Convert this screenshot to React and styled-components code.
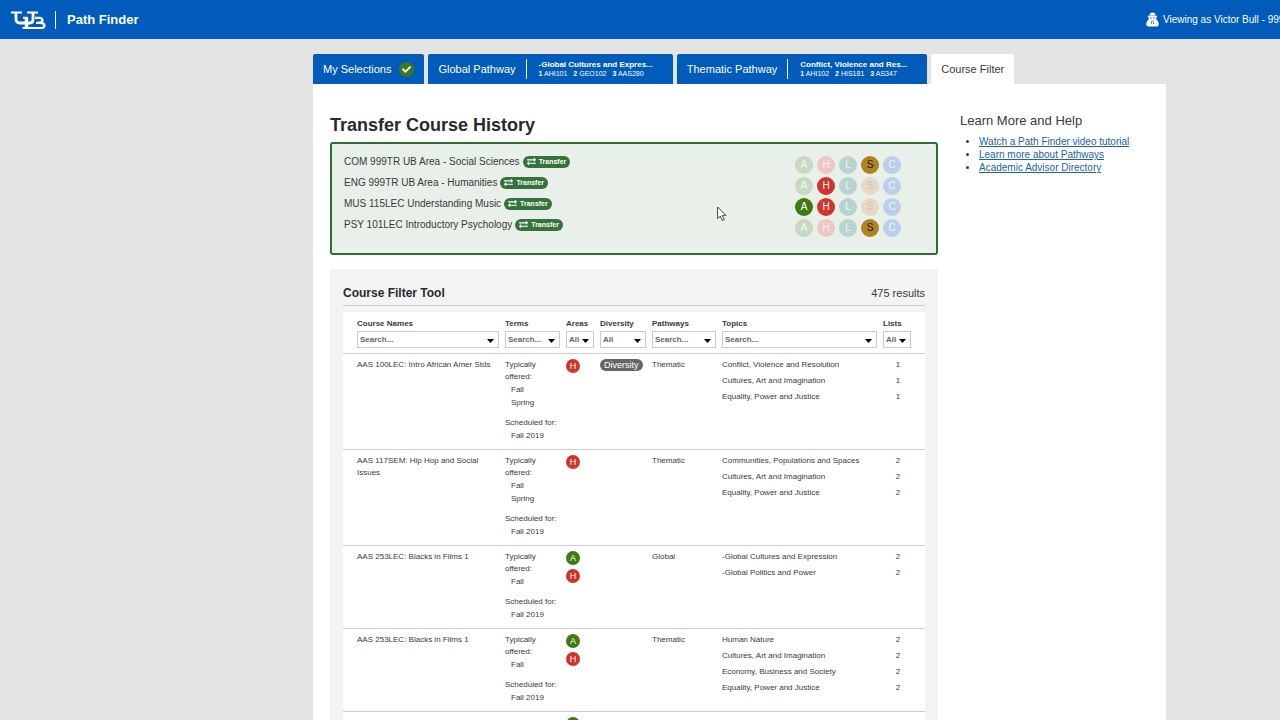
import React from 'react';
import styled, { createGlobalStyle, css } from 'styled-components';
import { FaCheck, FaExchangeAlt } from 'react-icons/fa';

const colors = {
  blue: '#005bbb',
  green: '#2d6e35',
  text: '#3a3a3a',
  line: '#ccc',
};

const areaColors = {
  A: { on: '#3f7a12', off: '#c9d8c0', text: '#fff', faded: '#f2f8ee' },
  H: { on: '#d2332a', off: '#ecc8c5', text: '#fff', faded: '#fbefed' },
  L: { on: '#00857c', off: '#b8d4d1', text: '#fff', faded: '#eef8f7' },
  S: { on: '#ad841f', off: '#e6dac6', text: '#1a1a1a', faded: '#dcc0b6' },
  C: { on: '#2f6fd0', off: '#bbcfe9', text: '#fff', faded: '#f0f6ff' },
};

const caretSVG =
  "<svg xmlns='http://www.w3.org/2000/svg' width='7' height='4'><path d='M0 0h7L3.5 4z' fill='black'/></svg>";

const GlobalStyle = createGlobalStyle`
  *, *::before, *::after {
    box-sizing: border-box;
  }

  body {
    margin: 0;
    background: #e4e4e4;
    color: ${colors.text};
    font-family: "Liberation Sans", Arial, sans-serif;
    font-size: 10px;
  }

  h1, h2, h3, p, ul {
    margin: 0;
    padding: 0;
  }
`;

const Header = styled.header`
  display: flex;
  align-items: center;
  height: 39px;
  padding-left: 11px;
  background: ${colors.blue};
  color: #fff;
`;

const Brand = styled.a`
  display: flex;
  align-items: center;
  color: inherit;
  font-size: 13px;
  font-weight: 700;
  text-decoration: none;
`;

const BrandName = styled.span`
  margin-left: 9px;
  padding-left: 11px;
  border-left: 1px solid #fff;
  line-height: 18px;
`;

const Viewer = styled.p`
  display: flex;
  align-items: center;
  gap: 4px;
  width: 134px;
  margin-left: auto;
  overflow: hidden;
  white-space: nowrap;

  svg {
    flex-shrink: 0;
  }
`;

const Page = styled.div`
  display: grid;
  grid-template-columns: minmax(0, 313fr) minmax(0, 853fr) minmax(0, 114fr);
  padding-top: 15px;
`;

const Content = styled.div`
  grid-column: 2;
`;

const Tabs = styled.nav`
  display: flex;
  gap: 4px;
`;

const Tab = styled.a`
  display: flex;
  align-items: center;
  height: 30px;
  padding: 0 10px;
  border-radius: 2px 2px 0 0;
  background: ${p => (p.$active ? '#fff' : colors.blue)};
  color: ${p => (p.$active ? colors.text : '#fff')};
  font-size: 11px;
  text-decoration: none;
  white-space: nowrap;
`;

const TabCheck = styled.span`
  display: grid;
  place-items: center;
  width: 15px;
  height: 15px;
  margin-left: 8px;
  border-radius: 50%;
  background: #3a7a1c;
`;

const TabDetail = styled.span`
  display: block;
  margin-left: 10px;
  padding: 1px 10px 1px 12px;
  border-left: 1px solid #fff;
  font-size: 8px;
  line-height: 9px;
`;

const TabCourses = styled.span`
  display: flex;
  gap: 6px;
  font-size: 7px;
`;

const Panel = styled.div`
  display: grid;
  grid-template-columns: minmax(0, 1fr) 206px;
  gap: 22px;
  padding: 29px 0 20px 17px;
  background: #fff;
`;

const PageTitle = styled.h1`
  margin-bottom: 5px;
  color: #2a2a2a;
  font-size: 18px;
  line-height: 24px;
`;

const History = styled.ul`
  position: relative;
  padding: 10px 35px 15px 12px;
  border: 2px solid ${colors.green};
  border-radius: 3px;
  background: #e9efe9;
  list-style: none;
`;

const HistoryItem = styled.li`
  display: flex;
  justify-content: space-between;
  height: 21px;
`;

const HistoryCourse = styled.p`
  display: flex;
  align-items: center;
  gap: 3px;
  height: 15px;
`;

const TransferBadge = styled.span`
  display: flex;
  align-items: center;
  gap: 3px;
  height: 12px;
  padding: 0 4px;
  border-radius: 6px;
  background: #34733a;
  color: #fff;
  font-size: 7px;
  font-weight: 700;
`;

const HistoryAreas = styled.div`
  display: flex;
  gap: 4px;
  padding-top: 2px;
`;

const AreaDot = styled.span`
  display: grid;
  place-items: center;
  width: ${p => (p.$small ? 14 : 18)}px;
  height: ${p => (p.$small ? 14 : 18)}px;
  border-radius: 50%;
  font-size: ${p => (p.$small ? 9 : 10)}px;
  line-height: 1;
  ${({ $area, $faded }) => css`
    background: ${areaColors[$area][$faded ? 'off' : 'on']};
    color: ${areaColors[$area][$faded ? 'faded' : 'text']};
  `}
`;

const Pointer = styled.svg`
  position: absolute;
  top: 62px;
  left: 385px;
`;

const FilterTool = styled.section`
  margin-top: 14px;
  padding: 14px 13px;
  background: #f3f3f3;
`;

const FilterHeader = styled.div`
  display: flex;
  justify-content: space-between;
  margin-bottom: 6px;
  padding-bottom: 2px;
  border-bottom: 1px solid ${colors.line};
  font-size: 11px;
  line-height: 20px;

  h2 {
    color: #2a2a2a;
    font-size: 12px;
  }
`;

const CourseTable = styled.table`
  width: 100%;
  table-layout: fixed;
  border-spacing: 0;
  background: #fff;
  font-size: 8px;
  line-height: 12px;
`;

const HeadCell = styled.th`
  width: ${p => p.$width};
  padding: 6px 6px 5px 0;
  border-bottom: 1px solid ${colors.line};
  text-align: left;
  vertical-align: top;

  &:first-child {
    padding-left: 14px;
  }

  &:last-child {
    padding-right: 14px;
  }

  label {
    display: block;
    margin-bottom: 1px;
  }
`;

const FilterSelect = styled.select`
  display: block;
  width: 100%;
  height: 17px;
  padding: 0 0 0 2px;
  border: 1px solid ${colors.line};
  border-radius: 0;
  appearance: none;
  background: #fff
    url("data:image/svg+xml;utf8,${encodeURIComponent(caretSVG)}") no-repeat
    right 4px top 7px;
  color: #666;
  font: 700 8px "Liberation Sans", Arial, sans-serif;
`;

const Cell = styled.td`
  padding: 5px 6px 7px 0;
  border-bottom: 1px solid ${colors.line};
  vertical-align: top;

  &:first-child {
    padding-left: 14px;
  }

  &:last-child {
    padding-right: 12px;
  }
`;

const TermList = styled.ul`
  padding-left: 6px;
  list-style: none;
  line-height: 13px;

  & + p {
    margin-top: 8px;
    white-space: nowrap;
  }
`;

const Stack = styled.ul`
  display: flex;
  flex-direction: column;
  gap: 4px;
  list-style: none;
  text-align: ${p => (p.$centered ? 'center' : 'left')};
`;

const DiversityBadge = styled.span`
  display: inline-block;
  padding: 0 4px;
  border-radius: 6px;
  background: #666;
  color: #fff;
  font-size: 9px;
`;

const Help = styled.aside`
  h3 {
    margin-bottom: 6px;
    font-size: 13px;
    font-weight: 400;
    line-height: 16px;
  }

  ul {
    padding-left: 19px;
    line-height: 13px;
  }

  a {
    color: #1a62ad;
  }
`;

const tabs = [
  { name: 'My Selections', done: true },
  {
    name: 'Global Pathway',
    topic: '-Global Cultures and Expres...',
    courses: ['AHI101', 'GEO102', 'AAS280'],
  },
  {
    name: 'Thematic Pathway',
    topic: 'Conflict, Violence and Res...',
    courses: ['AHI102', 'HIS181', 'AS347'],
  },
  { name: 'Course Filter', active: true },
];

const transfers = [
  { name: 'COM 999TR UB Area - Social Sciences', areas: 'S' },
  { name: 'ENG 999TR UB Area - Humanities', areas: 'H' },
  { name: 'MUS 115LEC Understanding Music', areas: 'AH' },
  { name: 'PSY 101LEC Introductory Psychology', areas: 'S' },
];

const filters = [
  { id: 'names', label: 'Course Names', value: 'Search...', width: '162px' },
  { id: 'terms', label: 'Terms', value: 'Search...', width: '61px' },
  { id: 'areas', label: 'Areas', value: 'All', width: '34px' },
  { id: 'diversity', label: 'Diversity', value: 'All', width: '52px' },
  { id: 'pathways', label: 'Pathways', value: 'Search...', width: '70px' },
  { id: 'topics', label: 'Topics', value: 'Search...' },
  { id: 'lists', label: 'Lists', value: 'All', width: '42px' },
];

const courses = [
  {
    name: 'AAS 100LEC: Intro African Amer Stds',
    terms: ['Fall', 'Spring'],
    areas: ['H'],
    diversity: true,
    pathway: 'Thematic',
    topics: [
      'Conflict, Violence and Resolution',
      'Cultures, Art and Imagination',
      'Equality, Power and Justice',
    ],
    lists: 1,
  },
  {
    name: 'AAS 117SEM: Hip Hop and Social Issues',
    terms: ['Fall', 'Spring'],
    areas: ['H'],
    pathway: 'Thematic',
    topics: [
      'Communities, Populations and Spaces',
      'Cultures, Art and Imagination',
      'Equality, Power and Justice',
    ],
    lists: 2,
  },
  {
    name: 'AAS 253LEC: Blacks in Films 1',
    terms: ['Fall'],
    areas: ['A', 'H'],
    pathway: 'Global',
    topics: ['-Global Cultures and Expression', '-Global Politics and Power'],
    lists: 2,
  },
  {
    name: 'AAS 253LEC: Blacks in Films 1',
    terms: ['Fall'],
    areas: ['A', 'H'],
    pathway: 'Thematic',
    topics: [
      'Human Nature',
      'Cultures, Art and Imagination',
      'Economy, Business and Society',
      'Equality, Power and Justice',
    ],
    lists: 2,
  },
  {
    name: 'AAS 254LEC: Blacks in Films 2',
    terms: ['Fall'],
    areas: ['A', 'H'],
    pathway: 'Global',
    topics: ['-Global Cultures and Expression', '-Global Politics and Power'],
    lists: 2,
  },
];

const Logo = () => (
  <svg width="35" height="20" viewBox="0 0 35 20" fill="none" stroke="#fff" aria-hidden="true">
    <path d="M0 2.500h11M16 2.500h11" strokeWidth="2" />
    <path d="M5 2.500v6.500q0 4 4 4h10q3 0 3-3.500v-7" strokeWidth="2.800" />
    <path d="M11.500 18h18q4 0 4-2.600t-4.500-2.600h-4" strokeWidth="2.200" />
    <path d="M24 7.800h4q3.500 0 3.500 2.500t-3.500 2.500" strokeWidth="2.200" />
    <path d="M15.500 8v10" strokeWidth="3.400" />
    <path d="M12 7.800h5" strokeWidth="2" />
  </svg>
);

const ViewerIcon = () => (
  <svg width="13" height="15" viewBox="0 0 13 15" fill="#fff" aria-hidden="true">
    <path d="M4.300.9Q6.500 0 8.700.9L9.600 3.600H3.400z" />
    <path d="M1.800 3.700h9.400v1.200H1.800z" />
    <path d="M2.600 4.500h7.800v3.300q2.200 1 2.400 4.200 0 2.500-2 2.500H2.200q-2 0-2-2.500.2-3.200 2.400-4.200z" />
    <path
      d="M4 6h2M7 6h2M5 9h3M5.500 10v2M7.500 10v2"
      fill="none"
      stroke={colors.blue}
      strokeWidth=".7"
    />
  </svg>
);

const CourseRow = ({ course }) => (
  <tr>
    <Cell>{course.name}</Cell>
    <Cell>
      <p>Typically offered:</p>
      <TermList>
        {course.terms.map(term => (
          <li key={term}>{term}</li>
        ))}
      </TermList>
      <p>Scheduled for:</p>
      <TermList>
        <li>Fall 2019</li>
      </TermList>
    </Cell>
    <Cell>
      <Stack>
        {course.areas.map(area => (
          <li key={area}>
            <AreaDot $area={area} $small>
              {area}
            </AreaDot>
          </li>
        ))}
      </Stack>
    </Cell>
    <Cell>{course.diversity && <DiversityBadge>Diversity</DiversityBadge>}</Cell>
    <Cell>{course.pathway}</Cell>
    <Cell>
      <Stack>
        {course.topics.map(topic => (
          <li key={topic}>{topic}</li>
        ))}
      </Stack>
    </Cell>
    <Cell>
      <Stack $centered>
        {course.topics.map(topic => (
          <li key={topic}>{course.lists}</li>
        ))}
      </Stack>
    </Cell>
  </tr>
);

export default function App() {
  return (
    <>
      <GlobalStyle />
      <Header>
        <Brand href="#home">
          <Logo />
          <BrandName>Path Finder</BrandName>
        </Brand>
        <Viewer>
          <ViewerIcon />
          Viewing as Victor Bull - 999
        </Viewer>
      </Header>

      <Page>
        <Content>
          <Tabs>
            {tabs.map(tab => (
              <Tab key={tab.name} href="#tab" $active={tab.active}>
                {tab.name}
                {tab.done && (
                  <TabCheck>
                    <FaCheck size={9} />
                  </TabCheck>
                )}
                {tab.topic && (
                  <TabDetail>
                    <b>{tab.topic}</b>
                    <TabCourses>
                      {tab.courses.map((code, i) => (
                        <span key={code}>
                          <b>{i + 1}</b> {code}
                        </span>
                      ))}
                    </TabCourses>
                  </TabDetail>
                )}
              </Tab>
            ))}
          </Tabs>

          <Panel>
            <main>
              <PageTitle>Transfer Course History</PageTitle>
              <History>
                {transfers.map(({ name, areas }) => (
                  <HistoryItem key={name}>
                    <HistoryCourse>
                      {name}
                      <TransferBadge>
                        <FaExchangeAlt size={9} />
                        Transfer
                      </TransferBadge>
                    </HistoryCourse>
                    <HistoryAreas>
                      {Object.keys(areaColors).map(area => (
                        <AreaDot key={area} $area={area} $faded={!areas.includes(area)}>
                          {area}
                        </AreaDot>
                      ))}
                    </HistoryAreas>
                  </HistoryItem>
                ))}
                <Pointer width="10" height="16" viewBox="0 0 10 16" aria-hidden="true">
                  <path
                    d="M.6 1v11.500l2.700-2.400 2 4.400 2-.9-2-4.200h3.600z"
                    fill="#fff"
                    stroke="#333"
                    strokeWidth=".9"
                  />
                </Pointer>
              </History>

              <FilterTool>
                <FilterHeader>
                  <h2>Course Filter Tool</h2>
                  <p>475 results</p>
                </FilterHeader>
                <CourseTable>
                  <thead>
                    <tr>
                      {filters.map(({ id, label, value, width }) => (
                        <HeadCell key={id} $width={width || 'auto'}>
                          <label htmlFor={id}>{label}</label>
                          <FilterSelect id={id}>
                            <option>{value}</option>
                          </FilterSelect>
                        </HeadCell>
                      ))}
                    </tr>
                  </thead>
                  <tbody>
                    {courses.map((course, i) => (
                      <CourseRow key={i} course={course} />
                    ))}
                  </tbody>
                </CourseTable>
              </FilterTool>
            </main>

            <Help>
              <h3>Learn More and Help</h3>
              <ul>
                <li>
                  <a href="#tutorial">Watch a Path Finder video tutorial</a>
                </li>
                <li>
                  <a href="#pathways">Learn more about Pathways</a>
                </li>
                <li>
                  <a href="#advisors">Academic Advisor Directory</a>
                </li>
              </ul>
            </Help>
          </Panel>
        </Content>
      </Page>
    </>
  );
}
